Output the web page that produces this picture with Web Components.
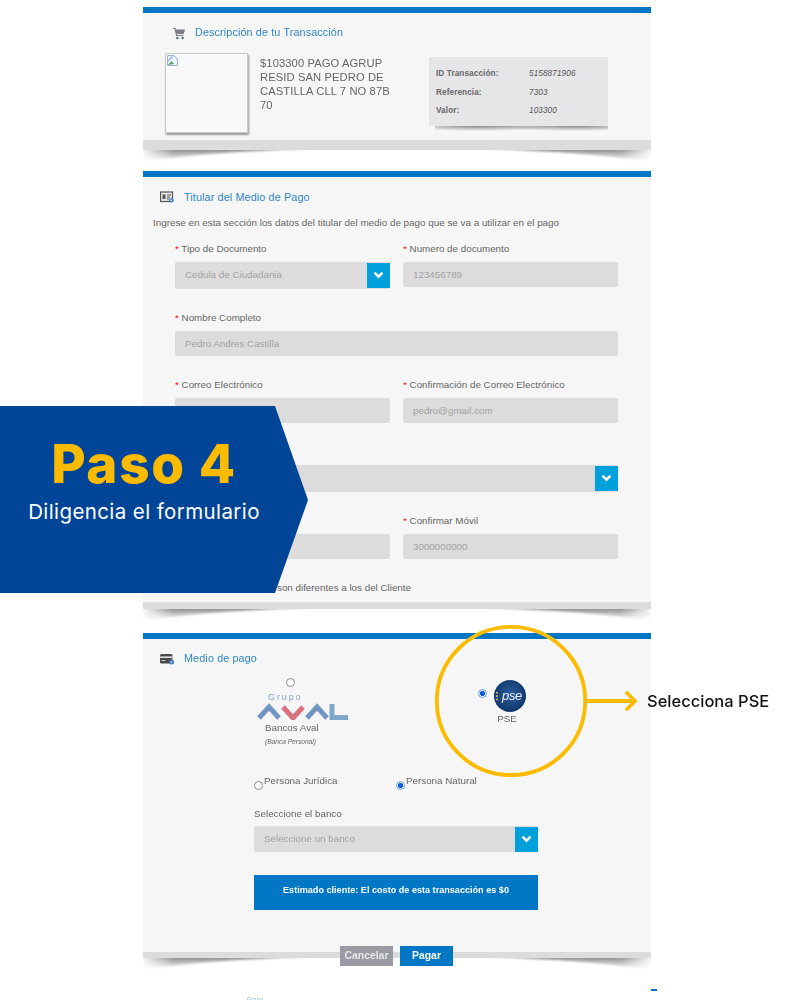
<!DOCTYPE html>
<html lang="es">
<head>
<meta charset="utf-8">
<title>Paso 4</title>
<style>
html,body{margin:0;padding:0;background:#fff}
body{width:800px;height:1000px;overflow:hidden;position:relative;font-family:"Liberation Sans",Arial,sans-serif}
</style>
</head>
<body>
<pay-page>
  <pay-card style="--panel:127.5px;--band:10px;--after:9px">
    <card-head slot="head" indent="195" style="padding-bottom:2px">
      <svg slot="icon" width="14" height="13" viewBox="0 0 14 13"><path d="M1 1.5h2l1.6 7h6.6" fill="none" stroke="#7a7e82" stroke-width="1.2"/><path d="M3.6 2.5H13l-1.2 4.6H4.6z" fill="#7a7e82"/><circle cx="5.4" cy="11" r="1.3" fill="#5b6d80"/><circle cx="10.6" cy="11" r="1.3" fill="#5b6d80"/></svg>
      Descripción de tu Transacción
    </card-head>
    <tx-summary>$103300 PAGO AGRUP RESID SAN PEDRO DE CASTILLA CLL 7 NO 87B 70</tx-summary>
  </pay-card>

  <pay-card style="--panel:425px;--band:7.5px;--after:12px">
    <card-head slot="head" indent="184">
      <svg slot="icon" width="14" height="12" viewBox="0 0 14 12"><rect x=".5" y="1" width="12" height="9.5" fill="#e8e8e8" stroke="#555" stroke-width="1.2"/><rect x="2.5" y="3.5" width="3" height="4.5" fill="#555"/><path d="M7 4h4M7 6h3M7 8h2" stroke="#555"/><circle cx="11.3" cy="9.3" r="2.3" fill="#3d86c6"/><circle cx="11.3" cy="9.3" r=".8" fill="#fff"/></svg>
      Titular del Medio de Pago
    </card-head>
    <holder-form>
      <span slot="intro">Ingrese en esta sección los datos del titular del medio de pago que se va a utilizar en el pago</span>
      <form-field label="Tipo de Documento"><form-select>Cedula de Ciudadania</form-select></form-field>
      <form-field label="Numero de documento"><form-input>123456789</form-input></form-field>
      <form-field label="Nombre Completo" style="grid-column:1/3"><form-input>Pedro Andres Castilla</form-input></form-field>
      <form-field label="Correo Electrónico"><form-input>pedro@gmail.com</form-input></form-field>
      <form-field label="Confirmación de Correo Electrónico"><form-input>pedro@gmail.com</form-input></form-field>
      <form-field style="grid-column:1/3"><form-select></form-select></form-field>
      <form-field><form-input></form-input></form-field>
      <form-field label="Confirmar Móvil"><form-input>3000000000</form-input></form-field>
      <span slot="note">son diferentes a los del Cliente</span>
    </holder-form>
  </pay-card>

  <pay-card style="--panel:313px;--band:6.5px;--after:0px">
    <card-head slot="head" indent="184" style="padding-bottom:2px">
      <svg slot="icon" width="14" height="12" viewBox="0 0 14 12"><rect x="0" y="1" width="12.5" height="9.5" rx="1.5" fill="#4a4a4a"/><rect x="0" y="3.4" width="12.5" height="1.6" fill="#ddd"/><rect x="1.5" y="7" width="4" height="1" fill="#ccc"/><circle cx="11.5" cy="9" r="2.5" fill="#3d7ac6"/><circle cx="11.5" cy="9" r=".8" fill="#fff"/></svg>
      Medio de pago
    </card-head>
    <payment-form></payment-form>
  </pay-card>
  <page-tail></page-tail>
</pay-page>

<step-banner></step-banner>
<pse-callout></pse-callout>

<script>
function def(name, html, setup){
  customElements.define(name, class extends HTMLElement{
    connectedCallback(){
      if(this.shadowRoot) return;
      const r=this.attachShadow({mode:'open'});
      r.innerHTML=typeof html==='function'?html(this):html;
      if(setup) setup(this,r);
    }
  });
}
const chevron='<svg width="11" height="8" viewBox="0 0 11 8"><path d="M1.5 1.7 5.5 5.7 9.5 1.7" fill="none" stroke="#fff" stroke-width="2.4"/></svg>';

def('pay-page',`<style>
:host{display:block;width:508px;margin-left:143px;padding-top:7px;filter:blur(.35px);color:#666}
</style><slot></slot>`);

def('pay-card',`<style>
:host{display:block;margin-bottom:var(--after)}
.top{height:5.5px;background:#0077c5}
.panel{height:var(--panel);box-sizing:border-box;background:#f6f6f6;border:0}
.band{height:var(--band);background:#dcdcdc}
.shadow{height:12px;display:flex;justify-content:space-between;overflow:hidden}
svg{display:block}
path.s{filter:blur(.8px)}
</style>
<div class="top"></div>
<div class="panel"><slot name="head"></slot><slot></slot></div>
<div class="band"></div>
<div class="shadow">
<svg width="190" height="12"><defs><linearGradient id="g" x1="0" y1="0" x2="0" y2="1"><stop offset="0" stop-color="#808080"/><stop offset=".35" stop-color="#b8b8b8"/><stop offset="1" stop-color="#fff"/></linearGradient><linearGradient id="f" x1="0" y1="0" x2="1" y2="0"><stop offset="0" stop-color="#fff" stop-opacity=".9"/><stop offset=".16" stop-color="#fff" stop-opacity="0"/></linearGradient></defs><path class="s" d="M0 -1H165Q60 2 0 12Z" fill="url(#g)"/><rect width="190" height="12" fill="url(#f)"/></svg>
<svg width="190" height="12" style="transform:scaleX(-1)"><path class="s" d="M0 -1H165Q60 2 0 12Z" fill="url(#g)"/><rect width="190" height="12" fill="url(#f)"/></svg>
</div>`);

def('card-head',h=>`<style>
:host{display:flex;align-items:center;height:40px;padding-left:${(+h.getAttribute('indent')-143)}px;position:relative;box-sizing:border-box;font-size:10.8px;color:#2f86c8;letter-spacing:.12px}
.ic{position:absolute;left:${h.getAttribute('indent')==='195'?29:17}px;top:14px;line-height:0}
</style><span class="ic"><slot name="icon"></slot></span><slot></slot>`);

def('tx-summary',`<style>
:host{display:block;height:87.5px;position:relative;font-size:11.2px;line-height:14px;color:#666;letter-spacing:.1px}
.wrap{display:flex;align-items:flex-start;padding-left:22px}
.thumb{width:81px;height:78px;margin-top:0;background:#f9f9f9;border:1px solid #c9c9c9;box-shadow:1px 2px 2px #999;position:relative;flex:none}
.thumb svg{position:absolute;left:1px;top:1px}
.desc{width:132px;margin:3px 0 0 12px;flex:none}
.info{margin:4px 0 0 37px;width:179px;height:69px;box-sizing:border-box;background:#e6e6e8;padding:8.5px 7px;font-size:8.2px;line-height:18.5px;color:#555;flex:none;position:relative}
.info::after{content:"";position:absolute;left:6px;right:0;bottom:-5px;height:5px;background:radial-gradient(ellipse 45% 100% at 25% 0,#888,transparent),radial-gradient(ellipse 45% 100% at 80% 0,#888,transparent)}
dl{margin:0;display:grid;grid-template-columns:93px 1fr}
dt{font-weight:700;color:#666}dd{margin:0;font-style:italic}
</style>
<div class="wrap">
<div class="thumb"><svg width="11" height="11" viewBox="0 0 11 11"><path d="M.5.5H7L10.5 4V10.5H.5Z" fill="#eef2fa" stroke="#9fb0c8"/><path d="M1 10 4.5 6 7 9 1 10Z" fill="#5aa35a"/><path d="M1 5 4 1.5 7 1.5 1 7Z" fill="#9cc0ee"/></svg></div>
<div class="desc"><slot></slot></div>
<div class="info"><dl><dt>ID Transacción:</dt><dd>5158871906</dd><dt>Referencia:</dt><dd>7303</dd><dt>Valor:</dt><dd>103300</dd></dl></div>
</div>`);

def('holder-form',`<style>
:host{display:block;font-size:9.8px;color:#666}
.intro{padding-left:10px;height:14px;line-height:14px;margin-top:-1px;margin-bottom:12px;font-size:9.85px}
.grid{display:grid;grid-template-columns:215px 215px;column-gap:13px;row-gap:22px;padding-left:32px;width:443px}
.note{margin:22px 0 0 134px;line-height:14px;font-size:9.8px}
</style>
<div class="intro"><slot name="intro"></slot></div>
<div class="grid"><slot></slot></div>
<div class="note"><slot name="note"></slot></div>`);

def('form-field',h=>{
  const l=h.getAttribute('label');
  return `<style>
:host{display:block;font-size:9.8px;color:#666}
.l{height:14px;line-height:14px;margin-bottom:6px;white-space:nowrap}
b{color:#e00;font-weight:400}
</style><div class="l">${l?`<b>*</b> ${l}`:''}</div><slot></slot>`;
});

def('form-input',`<style>
:host{display:flex;align-items:center;height:25px;box-sizing:border-box;background:#dcdcdc;border-radius:2px;padding:0 10px;font-size:9.8px;color:#a2a2a2}
</style><slot></slot>`);

def('form-select',`<style>
:host{display:flex;align-items:center;height:27px;box-sizing:border-box;background:#dcdcdc;border-radius:2px;padding:0 .5px 1px 10px;font-size:9.8px;color:#a2a2a2;justify-content:space-between}
.b{width:22.5px;height:25px;margin-top:1px;background:#00a0dc;display:flex;align-items:center;justify-content:center;flex:none}
</style><span><slot></slot></span><span class="b">${chevron}</span>`);

def('radio-dot',h=>`<style>
:host{display:inline-block;width:9px;height:9px;flex:none}
i{display:block;width:9px;height:9px;box-sizing:border-box;border-radius:50%;${h.hasAttribute('on')?'background:radial-gradient(circle,#0b5be0 0 2.3px,#fff 2.8px,#8fb8ff 4.5px);border:.5px solid #6ea2f5':'background:#fff;border:1px solid #8a8a8a'}}
</style><i></i>`);

def('payment-form',`<style>
:host{display:block;position:relative;font-size:9.8px;color:#666}
.opts{display:flex;height:94px;margin-top:-1px;align-items:flex-start}
.bank{margin-left:114px;width:100px;position:relative;flex:none}
.bank radio-dot{display:block;margin-left:29px}
.grupo{margin:5px 0 0 11px;font-size:9px;line-height:10px;letter-spacing:1.9px;color:#86a5cc}
.aval{display:block;margin-top:1px}
.bn{margin:1px 0 0 8px;line-height:14px;font-size:9.8px;height:14px}
.bp{margin:2px 0 0 8px;font-size:6.6px;line-height:9px;font-style:italic}
.pse{margin-left:121px;margin-top:11px;display:flex;flex:none;align-items:flex-start}
.pw{margin-left:7px;width:32px;margin-top:-9px;text-align:center}
.logo{width:32px;height:32px;border-radius:50%;background:radial-gradient(circle at 50% 45%,#2a5c9c,#0f3468 80%);color:#e8eef8;font:italic 13px/31px "Liberation Sans",Arial,sans-serif;text-align:center;position:relative;text-indent:4px;letter-spacing:-.3px}
.logo::before{content:"";position:absolute;left:1px;top:11px;width:4px;height:10px;background:radial-gradient(circle,#d6b04c 0 1px,transparent 1.2px) 0 0/4px 3.4px}
.pl{margin:1px 0 0 -7px;line-height:12px;width:40px}
.body{margin-left:111px;width:284px}
.kinds{display:flex;height:35px;position:relative}
.k{display:flex;align-items:flex-start;width:143px;flex:none}
.k radio-dot{margin-top:9px;margin-right:1px}
.k span{line-height:14px;margin-top:2px}
.lab{line-height:14px;height:14px;margin-bottom:5px}
form-select{width:284px;height:26px;padding-bottom:0}
.msg{margin-top:23px;height:35px;background:#0077c5;color:#fff;font-weight:700;display:flex;align-items:center;justify-content:center;padding-bottom:5px;box-sizing:border-box;font-size:9.1px}
.btns{display:flex;gap:7px;margin:36px 0 0 86px;position:relative;z-index:1}
.btns span{height:20px;display:flex;align-items:center;justify-content:center;font-weight:700;font-size:10.4px;color:#e8e8ea;width:53px}
.c{background:#9a9aa5}.p{background:#0077c5;color:#fff!important}
</style>
<div class="opts">
  <div class="bank">
    <radio-dot></radio-dot>
    <div class="grupo">Grupo</div>
    <svg class="aval" width="92" height="17" viewBox="0 0 92 17"><path d="M2 15 12 4 22 15" fill="none" stroke="#7396c2" stroke-width="5"/><path d="M26 4 36 15 46 4" fill="none" stroke="#d9727f" stroke-width="5"/><path d="M50 15 60 4 70 15" fill="none" stroke="#7396c2" stroke-width="5"/><path d="M75 1V14.5H91" fill="none" stroke="#7ea7c9" stroke-width="5"/></svg>
    <div class="bn">Bancos Aval</div>
    <div class="bp">(Banca Personal)</div>
  </div>
  <div class="pse">
    <radio-dot on></radio-dot>
    <div class="pw"><div class="logo">pse</div><div class="pl">PSE</div></div>
  </div>
</div>
<div class="body">
  <div class="kinds">
    <div class="k"><radio-dot></radio-dot><span>Persona Jurídica</span></div>
    <div class="k" style="width:140px"><radio-dot on style="margin-left:-1px"></radio-dot><span>Persona Natural</span></div>
  </div>
  <div class="lab">Seleccione el banco</div>
  <form-select>Seleccione un banco</form-select>
  <div class="msg">Estimado cliente: El costo de esta transacción es $0</div>
  <div class="btns"><span class="c">Cancelar</span><span class="p">Pagar</span></div>
</div>`);

def('page-tail',`<style>
:host{display:block;position:absolute;left:0;top:989px;width:508px;height:11px}
.d{position:absolute;left:508px;top:0;width:6px;height:1.5px;background:#0077c5}
.g{position:absolute;left:104px;top:7px;font-size:5px;letter-spacing:.5px;color:#86a5cc}
</style><div class="d"></div><div class="g">Grupo</div>`);

def('step-banner',`<style>
:host{position:absolute;left:0;top:406px;width:308px;height:187px;display:flex;flex-direction:column;align-items:center;background:#004597;clip-path:polygon(0 0,275px 0,308px 94px,275px 187px,0 187px);box-sizing:border-box;padding:27px 20px 0 0;font-family:Inter,sans-serif}
.t{font-size:53px;line-height:62px;font-weight:800;color:#fdbb00;letter-spacing:1.6px;white-space:nowrap}
.s{margin-top:5px;font-size:20.5px;line-height:24px;font-weight:400;color:#fff;letter-spacing:.4px;white-space:nowrap}
</style><div class="t">Paso 4</div><div class="s">Diligencia el formulario</div>`);

def('pse-callout',`<style>
:host{position:absolute;left:433px;top:623px;width:345px;height:156px;display:flex;align-items:center;font-family:Inter,sans-serif}
svg{flex:none;display:block}
.t{margin:0 0 1px 10px;font-size:16.5px;font-weight:500;color:#111;white-space:nowrap}
</style>
<svg width="204" height="156" viewBox="0 0 204 156"><circle cx="78" cy="78" r="74.2" fill="none" stroke="#fdbb00" stroke-width="3.8"/><path d="M155 78H202M194 70l8 8-8 8" fill="none" stroke="#fdbb00" stroke-width="3.8" stroke-linecap="round" stroke-linejoin="round"/></svg>
<span class="t">Selecciona PSE</span>`);
</script>
</body>
</html>
